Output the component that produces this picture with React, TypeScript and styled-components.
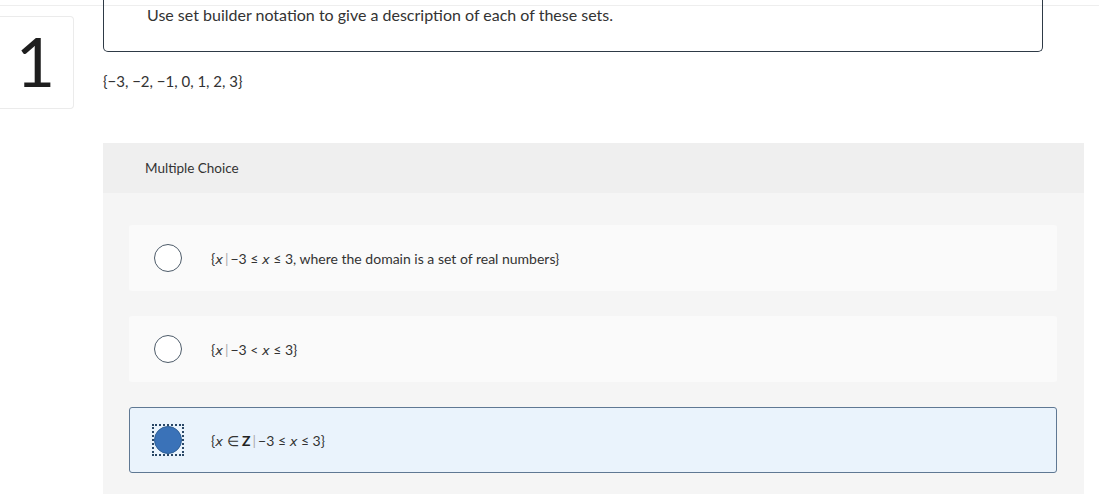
import React from "react";
import styled, { createGlobalStyle } from "styled-components";

const Global = createGlobalStyle`
  html, body { margin: 0; padding: 0; background: #fff; }
  body {
    font-family: Lato, "Open Sans", "Liberation Sans", sans-serif;
    color: #333;
    background-image: linear-gradient(#eeeeee, #eeeeee);
    background-repeat: no-repeat;
    background-position: 0 5px;
    background-size: 100% 1px;
  }
`;

const Page = styled.div`
  display: flex;
  width: 1099px;
  height: 494px;
  overflow: hidden;
`;

const Gutter = styled.div`
  width: 103px;
  flex: none;
  padding-top: 16px;
`;

const NumberBox = styled.div`
  width: 74px;
  height: 93px;
  box-sizing: border-box;
  border: 1px solid #ebebeb;
  border-left: none;
  border-radius: 0 4px 4px 0;
  display: flex;
  align-items: center;
  justify-content: center;
  font-size: 68px;
  line-height: 1;
  font-weight: 400;
  color: #1e1e1e;
  padding-bottom: 4px;
  padding-right: 2px;
`;

const Main = styled.div`
  display: flex;
  flex-direction: column;
  width: 981px;
`;

const Instruction = styled.div`
  width: 940px;
  height: 52px;
  flex: none;
  box-sizing: border-box;
  border: 1px solid #2e3a46;
  border-top: none;
  border-radius: 0 0 5px 5px;
  padding: 5px 0 0 43px;
  font-size: 16px;
  color: #333;
`;

const SetLine = styled.div`
  margin-top: 20px;
  font-size: 15px;
  color: #333;
  height: 20px;
  flex: none;
`;

const Panel = styled.div`
  margin-top: 51px;
  display: flex;
  flex-direction: column;
  background: #f5f5f5;
  flex: 1;
`;

const PanelHeader = styled.div`
  height: 50px;
  flex: none;
  background: #efefef;
  display: flex;
  align-items: center;
  padding-left: 42px;
  font-size: 13.5px;
  color: #333;
`;

const Options = styled.div`
  display: flex;
  flex-direction: column;
  gap: 25px;
  padding: 32px 27px 22px 26px;
`;

const Option = styled.div<{ $selected?: boolean }>`
  height: 66px;
  flex: none;
  box-sizing: border-box;
  display: flex;
  align-items: center;
  padding-left: 23px;
  gap: 31px;
  border-radius: 3px;
  background: ${(p) => (p.$selected ? "#eaf3fc" : "#fafafa")};
  border: 1px solid ${(p) => (p.$selected ? "#5f7893" : "transparent")};
`;

const RadioWrap = styled.div<{ $focus?: boolean }>`
  width: 32px;
  height: 32px;
  flex: none;
  box-sizing: border-box;
  display: flex;
  align-items: center;
  justify-content: center;
  border: 2px dotted ${(p) => (p.$focus ? "#2a4766" : "transparent")};
  margin-left: -1px;
  margin-right: -4px;
`;

const Radio = styled.div<{ $checked?: boolean }>`
  width: 28px;
  height: 28px;
  flex: none;
  box-sizing: border-box;
  border-radius: 50%;
  border: 1.5px solid ${(p) => (p.$checked ? "#2f5f96" : "#4d5b69")};
  background: ${(p) => (p.$checked ? "#3a72b8" : "#fff")};
`;

const OptText = styled.div`
  font-size: 14px;
  color: #333;
`;

const V = styled.i`
  font-style: italic;
  font-family: "DejaVu Sans", Lato, sans-serif;
  font-size: 13px;
`;

const Bar = styled.span`
  color: #aaa;
  padding: 0 2px;
`;

const B = styled.b`
  font-weight: 700;
  color: #222;
`;

export default function App() {
  return (
    <>
      <Global />
      <Page>
        <Gutter>
          <NumberBox>1</NumberBox>
        </Gutter>
        <Main>
          <Instruction>Use set builder notation to give a description of each of these sets.</Instruction>
          <SetLine>{"{−3, −2, −1, 0, 1, 2, 3}"}</SetLine>
          <Panel>
            <PanelHeader>Multiple Choice</PanelHeader>
            <Options>
              <Option>
                <RadioWrap>
                  <Radio />
                </RadioWrap>
                <OptText>
                  {"{"}
                  <V>x</V>
                  <Bar>|</Bar>−3 ≤ <V>x</V> ≤ 3, where the domain is a set of real numbers{"}"}
                </OptText>
              </Option>
              <Option>
                <RadioWrap>
                  <Radio />
                </RadioWrap>
                <OptText>
                  {"{"}
                  <V>x</V>
                  <Bar>|</Bar>−3 &lt; <V>x</V> ≤ 3{"}"}
                </OptText>
              </Option>
              <Option $selected>
                <RadioWrap $focus>
                  <Radio $checked />
                </RadioWrap>
                <OptText>
                  {"{"}
                  <V>x</V> ∈ <B>Z</B>
                  <Bar>|</Bar>−3 ≤ <V>x</V> ≤ 3{"}"}
                </OptText>
              </Option>
            </Options>
          </Panel>
        </Main>
      </Page>
    </>
  );
}
